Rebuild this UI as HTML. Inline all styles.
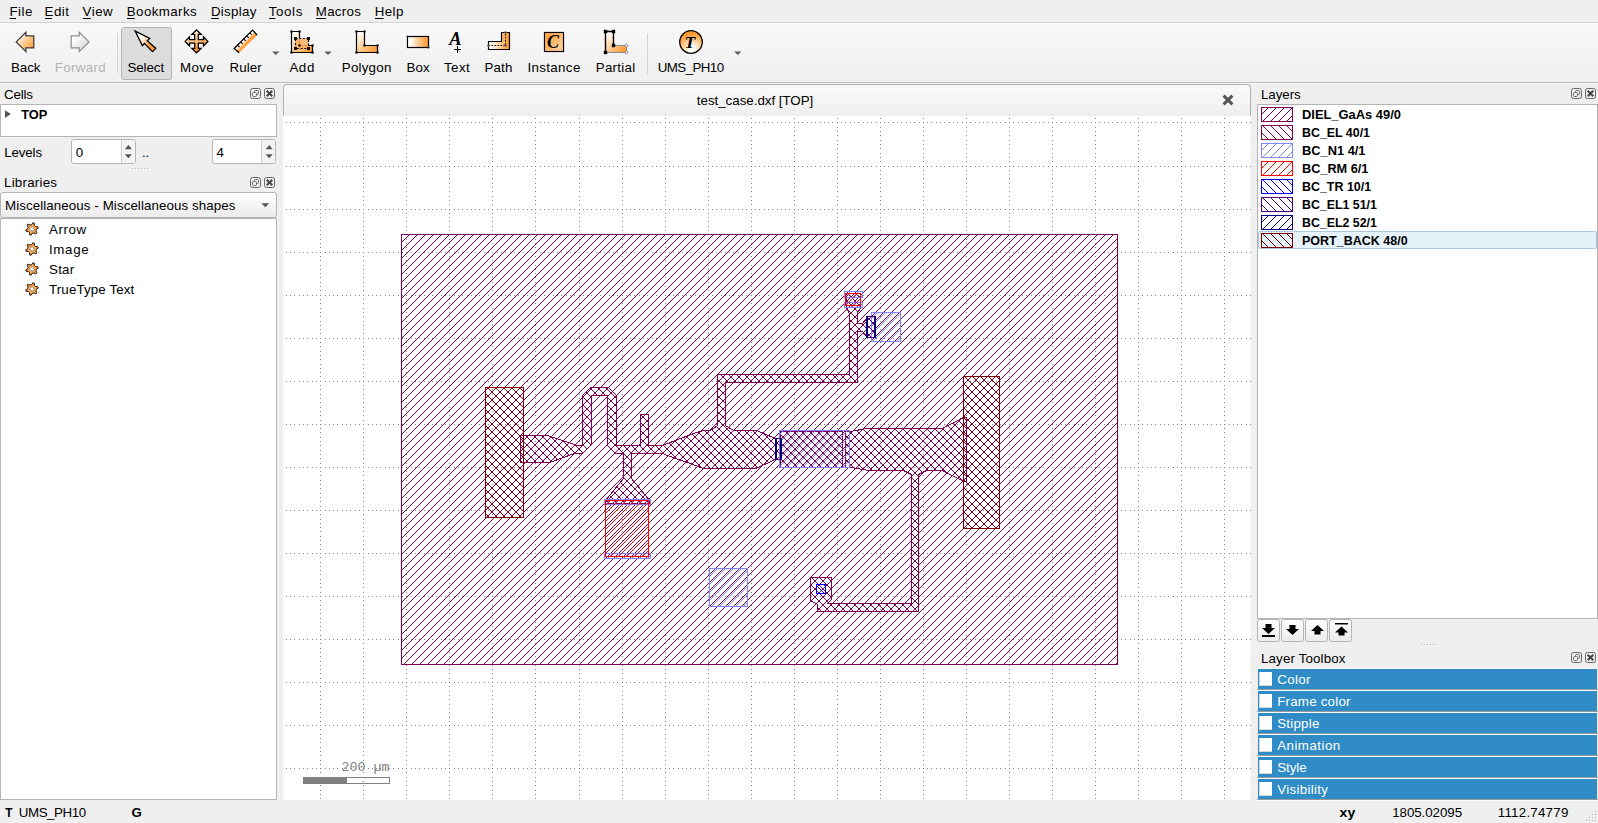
<!DOCTYPE html><html><head><meta charset="utf-8"><title>KLayout</title><style>
*{box-sizing:border-box;margin:0;padding:0}
html,body{width:1598px;height:823px;overflow:hidden}
body{background:#efefef;font-family:"Liberation Sans","DejaVu Sans",sans-serif;font-size:13.33px;color:#000;position:relative}
.a{position:absolute;white-space:nowrap;line-height:1}
.cv{position:absolute;left:283px;top:116px;isolation:isolate}

.ov{position:absolute;left:0;top:0;font-family:"Liberation Sans","DejaVu Sans",sans-serif;font-size:13.33px}
.menubar{left:0;top:0;width:1598px;height:23px;background:#efefef;border-bottom:1px solid #d4d4d4}
.toolbar{left:0;top:23px;width:1598px;height:60px;background:linear-gradient(#f8f8f8,#efefef);border-bottom:1px solid #bdbdbd}
.box{background:#fff;border:1px solid #b4b4b4}
.btn{border:1px solid #b4b4b4;border-radius:3px;background:linear-gradient(#fefefe,#ebebeb)}
.bar{left:1258px;width:339px;height:20px;background:#308cc6}
.barl{left:1257px;width:341px;height:1px;background:#9a9a9a}
.chk{left:1px;top:3px;width:13px;height:14px;background:#fff;border-left:1px solid #d8d8d8;border-bottom:1px solid #d8d8d8}
.spin{background:#fff;border:1px solid #b4b4b4;border-radius:3px;width:65px;height:25px;overflow:hidden}
.spin i{position:absolute;right:0;top:0;width:14px;height:23px;background:#f4f4f4;border-left:1px solid #d0d0d0}
</style></head><body><div class="a menubar" style=""></div>
<div class="a toolbar" style=""></div>
<div class="a " style="left:0;top:83px;width:1598px;height:1px;background:#f7f7f7"></div>
<div class="a " style="left:121px;top:27px;width:51px;height:53px;background:#dcdcdc;border:1px solid #b2b2b2;border-radius:3px"></div>
<div class="a " style="left:117px;top:33px;width:1px;height:41px;background:#d2d2d2"></div>
<div class="a " style="left:647px;top:33px;width:1px;height:41px;background:#d2d2d2"></div>
<div class="a box" style="left:0;top:104px;width:277px;height:33px"></div>
<div class="a spin" style="left:71px;top:139px"><i></i></div>
<div class="a spin" style="left:212px;top:139px;width:64px"><i></i></div>
<div class="a btn" style="left:0;top:192px;width:277px;height:26px"></div>
<div class="a box" style="left:0;top:218px;width:277px;height:582px"></div>
<div class="a " style="left:283px;top:84px;width:968px;height:32px;background:linear-gradient(#f9f9f9,#efefef);border:1px solid #b0b0b0;border-bottom:none;border-radius:4px 4px 0 0"></div>
<svg class="cv" width="968" height="684" viewBox="283 116 968 684" shape-rendering="crispEdges"><defs><pattern id="h0" patternUnits="userSpaceOnUse" width="8" height="8" fill="#800057"><rect x="3" y="0" width="1" height="1"/><rect x="2" y="1" width="1" height="1"/><rect x="1" y="2" width="1" height="1"/><rect x="0" y="3" width="1" height="1"/><rect x="7" y="4" width="1" height="1"/><rect x="6" y="5" width="1" height="1"/><rect x="5" y="6" width="1" height="1"/><rect x="4" y="7" width="1" height="1"/></pattern><pattern id="h1" patternUnits="userSpaceOnUse" width="8" height="8" fill="#800057"><rect x="2" y="0" width="1" height="1"/><rect x="3" y="1" width="1" height="1"/><rect x="4" y="2" width="1" height="1"/><rect x="5" y="3" width="1" height="1"/><rect x="6" y="4" width="1" height="1"/><rect x="7" y="5" width="1" height="1"/><rect x="0" y="6" width="1" height="1"/><rect x="1" y="7" width="1" height="1"/></pattern><pattern id="h2" patternUnits="userSpaceOnUse" width="8" height="8" fill="#8086ff"><rect x="5" y="0" width="1" height="1"/><rect x="4" y="1" width="1" height="1"/><rect x="3" y="2" width="1" height="1"/><rect x="2" y="3" width="1" height="1"/><rect x="1" y="4" width="1" height="1"/><rect x="0" y="5" width="1" height="1"/><rect x="7" y="6" width="1" height="1"/><rect x="6" y="7" width="1" height="1"/></pattern><pattern id="h3" patternUnits="userSpaceOnUse" width="8" height="8" fill="#ff0000"><rect x="6" y="0" width="1" height="1"/><rect x="5" y="1" width="1" height="1"/><rect x="4" y="2" width="1" height="1"/><rect x="3" y="3" width="1" height="1"/><rect x="2" y="4" width="1" height="1"/><rect x="1" y="5" width="1" height="1"/><rect x="0" y="6" width="1" height="1"/><rect x="7" y="7" width="1" height="1"/></pattern><pattern id="h4" patternUnits="userSpaceOnUse" width="8" height="8" fill="#0000ff"><rect x="7" y="0" width="1" height="1"/><rect x="0" y="1" width="1" height="1"/><rect x="1" y="2" width="1" height="1"/><rect x="2" y="3" width="1" height="1"/><rect x="3" y="4" width="1" height="1"/><rect x="4" y="5" width="1" height="1"/><rect x="5" y="6" width="1" height="1"/><rect x="6" y="7" width="1" height="1"/></pattern><pattern id="h5" patternUnits="userSpaceOnUse" width="8" height="8" fill="#500080"><rect x="6" y="0" width="1" height="1"/><rect x="7" y="1" width="1" height="1"/><rect x="0" y="2" width="1" height="1"/><rect x="1" y="3" width="1" height="1"/><rect x="2" y="4" width="1" height="1"/><rect x="3" y="5" width="1" height="1"/><rect x="4" y="6" width="1" height="1"/><rect x="5" y="7" width="1" height="1"/></pattern><pattern id="h6" patternUnits="userSpaceOnUse" width="8" height="8" fill="#000080"><rect x="1" y="0" width="1" height="1"/><rect x="0" y="1" width="1" height="1"/><rect x="7" y="2" width="1" height="1"/><rect x="6" y="3" width="1" height="1"/><rect x="5" y="4" width="1" height="1"/><rect x="4" y="5" width="1" height="1"/><rect x="3" y="6" width="1" height="1"/><rect x="2" y="7" width="1" height="1"/></pattern><pattern id="h7" patternUnits="userSpaceOnUse" width="8" height="8" fill="#800000"><rect x="4" y="0" width="1" height="1"/><rect x="5" y="1" width="1" height="1"/><rect x="6" y="2" width="1" height="1"/><rect x="7" y="3" width="1" height="1"/><rect x="0" y="4" width="1" height="1"/><rect x="1" y="5" width="1" height="1"/><rect x="2" y="6" width="1" height="1"/><rect x="3" y="7" width="1" height="1"/></pattern><path id="gh" d="M286 0h1m3 0h1m3 0h1m4 0h1m3 0h1m3 0h1m4 0h1m3 0h1m3 0h1m4 0h1m3 0h1m3 0h1m3 0h1m4 0h1m3 0h1m3 0h1m4 0h1m3 0h1m3 0h1m4 0h1m3 0h1m3 0h1m3 0h1m4 0h1m3 0h1m3 0h1m4 0h1m3 0h1m3 0h1m4 0h1m3 0h1m3 0h1m4 0h1m3 0h1m3 0h1m3 0h1m4 0h1m3 0h1m3 0h1m4 0h1m3 0h1m3 0h1m4 0h1m3 0h1m3 0h1m3 0h1m4 0h1m3 0h1m3 0h1m4 0h1m3 0h1m3 0h1m4 0h1m3 0h1m3 0h1m4 0h1m3 0h1m3 0h1m3 0h1m4 0h1m3 0h1m3 0h1m4 0h1m3 0h1m3 0h1m4 0h1m3 0h1m3 0h1m4 0h1m3 0h1m3 0h1m3 0h1m4 0h1m3 0h1m3 0h1m4 0h1m3 0h1m3 0h1m4 0h1m3 0h1m3 0h1m3 0h1m4 0h1m3 0h1m3 0h1m4 0h1m3 0h1m3 0h1m4 0h1m3 0h1m3 0h1m4 0h1m3 0h1m3 0h1m3 0h1m4 0h1m3 0h1m3 0h1m4 0h1m3 0h1m3 0h1m4 0h1m3 0h1m3 0h1m3 0h1m4 0h1m3 0h1m3 0h1m4 0h1m3 0h1m3 0h1m4 0h1m3 0h1m3 0h1m4 0h1m3 0h1m3 0h1m3 0h1m4 0h1m3 0h1m3 0h1m4 0h1m3 0h1m3 0h1m4 0h1m3 0h1m3 0h1m3 0h1m4 0h1m3 0h1m3 0h1m4 0h1m3 0h1m3 0h1m4 0h1m3 0h1m3 0h1m4 0h1m3 0h1m3 0h1m3 0h1m4 0h1m3 0h1m3 0h1m4 0h1m3 0h1m3 0h1m4 0h1m3 0h1m3 0h1m3 0h1m4 0h1m3 0h1m3 0h1m4 0h1m3 0h1m3 0h1m4 0h1m3 0h1m3 0h1m4 0h1m3 0h1m3 0h1m3 0h1m4 0h1m3 0h1m3 0h1m4 0h1m3 0h1m3 0h1m4 0h1m3 0h1m3 0h1m4 0h1m3 0h1m3 0h1m3 0h1m4 0h1m3 0h1m3 0h1m4 0h1m3 0h1m3 0h1m4 0h1m3 0h1m3 0h1m3 0h1m4 0h1m3 0h1m3 0h1m4 0h1m3 0h1m3 0h1m4 0h1m3 0h1m3 0h1m4 0h1m3 0h1m3 0h1m3 0h1m4 0h1m3 0h1m3 0h1m4 0h1m3 0h1m3 0h1m4 0h1m3 0h1m3 0h1m3 0h1m4 0h1m3 0h1m3 0h1m4 0h1m3 0h1m3 0h1m4 0h1m3 0h1m3 0h1m4 0h1m3 0h1m3 0h1m3 0h1m4 0h1m3 0h1" stroke="#808080" stroke-width="1" fill="none"/><path id="gv" d="M0 118v1m0 3v1m0 4v1m0 3v1m0 3v1m0 4v1m0 3v1m0 3v1m0 4v1m0 3v1m0 3v1m0 4v1m0 3v1m0 3v1m0 3v1m0 4v1m0 3v1m0 3v1m0 4v1m0 3v1m0 3v1m0 4v1m0 3v1m0 3v1m0 3v1m0 4v1m0 3v1m0 3v1m0 4v1m0 3v1m0 3v1m0 4v1m0 3v1m0 3v1m0 4v1m0 3v1m0 3v1m0 3v1m0 4v1m0 3v1m0 3v1m0 4v1m0 3v1m0 3v1m0 4v1m0 3v1m0 3v1m0 4v1m0 3v1m0 3v1m0 3v1m0 4v1m0 3v1m0 3v1m0 4v1m0 3v1m0 3v1m0 4v1m0 3v1m0 3v1m0 3v1m0 4v1m0 3v1m0 3v1m0 4v1m0 3v1m0 3v1m0 4v1m0 3v1m0 3v1m0 4v1m0 3v1m0 3v1m0 3v1m0 4v1m0 3v1m0 3v1m0 4v1m0 3v1m0 3v1m0 4v1m0 3v1m0 3v1m0 3v1m0 4v1m0 3v1m0 3v1m0 4v1m0 3v1m0 3v1m0 4v1m0 3v1m0 3v1m0 4v1m0 3v1m0 3v1m0 3v1m0 4v1m0 3v1m0 3v1m0 4v1m0 3v1m0 3v1m0 4v1m0 3v1m0 3v1m0 3v1m0 4v1m0 3v1m0 3v1m0 4v1m0 3v1m0 3v1m0 4v1m0 3v1m0 3v1m0 4v1m0 3v1m0 3v1m0 3v1m0 4v1m0 3v1m0 3v1m0 4v1m0 3v1m0 3v1m0 4v1m0 3v1m0 3v1m0 3v1m0 4v1m0 3v1m0 3v1m0 4v1m0 3v1m0 3v1m0 4v1m0 3v1m0 3v1m0 4v1m0 3v1m0 3v1m0 3v1m0 4v1m0 3v1m0 3v1m0 4v1m0 3v1m0 3v1m0 4v1m0 3v1m0 3v1m0 3v1m0 4v1m0 3v1m0 3v1m0 4v1m0 3v1m0 3v1" stroke="#808080" stroke-width="1" fill="none"/></defs><rect x="283" y="116" width="968" height="684" fill="#fff"/><use href="#gh" y="122.5"/><use href="#gh" y="166.5"/><use href="#gh" y="209.5"/><use href="#gh" y="252.5"/><use href="#gh" y="295.5"/><use href="#gh" y="338.5"/><use href="#gh" y="381.5"/><use href="#gh" y="424.5"/><use href="#gh" y="467.5"/><use href="#gh" y="510.5"/><use href="#gh" y="553.5"/><use href="#gh" y="596.5"/><use href="#gh" y="639.5"/><use href="#gh" y="682.5"/><use href="#gh" y="725.5"/><use href="#gh" y="768.5"/><use href="#gv" x="320.5"/><use href="#gv" x="363.5"/><use href="#gv" x="406.5"/><use href="#gv" x="449.5"/><use href="#gv" x="492.5"/><use href="#gv" x="535.5"/><use href="#gv" x="579.5"/><use href="#gv" x="622.5"/><use href="#gv" x="665.5"/><use href="#gv" x="708.5"/><use href="#gv" x="751.5"/><use href="#gv" x="794.5"/><use href="#gv" x="837.5"/><use href="#gv" x="880.5"/><use href="#gv" x="923.5"/><use href="#gv" x="966.5"/><use href="#gv" x="1009.5"/><use href="#gv" x="1052.5"/><use href="#gv" x="1095.5"/><use href="#gv" x="1138.5"/><use href="#gv" x="1181.5"/><use href="#gv" x="1224.5"/><polygon class="m" points="401.5,234.5 1117.5,234.5 1117.5,664.5 401.5,664.5" fill="url(#h0)" stroke="#800057" stroke-width="1"/><polygon class="m" points="520.5,435.5 547.5,435.5 577.5,445.5 582.5,445.5 582.5,395.5 590.5,387.5 608.5,387.5 616.5,395.5 616.5,445.5 640.5,445.5 640.5,414.5 648.5,414.5 648.5,445.5 662.5,445.5 675.5,440.5 688.5,435.5 696.5,432.5 703.5,430.5 710.5,430.5 717.5,425.5 717.5,374.5 849.5,374.5 849.5,313.5 846.5,308.5 846.5,293.5 860.5,293.5 860.5,308.5 857.5,312.5 857.5,323.5 862.5,323.5 866.5,318.5 866.5,336.5 862.5,331.5 857.5,331.5 857.5,382.5 725.5,382.5 725.5,425.5 733.5,430.5 756.5,430.5 775.5,438.5 775.5,459.5 755.5,468.5 703.5,468.5 695.5,465.5 687.5,462.5 675.5,458.5 662.5,453.5 631.5,453.5 631.5,478.5 649.5,500.5 649.5,503.5 605.5,503.5 605.5,500.5 623.5,478.5 623.5,453.5 615.5,453.5 607.5,445.5 607.5,395.5 591.5,395.5 591.5,444.5 582.5,453.5 574.5,453.5 549.5,462.5 520.5,462.5" fill="url(#h1)" stroke="#800057" stroke-width="1"/><polygon class="m" points="780.5,431.5 842.5,431.5 842.5,467.5 780.5,467.5" fill="url(#h1)" stroke="#800057" stroke-width="1"/><polygon class="m" points="845.5,431.5 850.5,431.5 866.5,428.5 942.5,428.5 963.5,417.5 966.5,417.5 966.5,481.5 963.5,481.5 942.5,470.5 926.5,470.5 918.5,474.5 918.5,611.5 817.5,611.5 817.5,604.5 810.5,600.5 810.5,577.5 831.5,577.5 831.5,599.5 827.5,603.5 911.5,603.5 911.5,474.5 903.5,470.5 869.5,470.5 850.5,467.5 845.5,467.5" fill="url(#h1)" stroke="#800057" stroke-width="1"/><polygon class="m" points="709.5,568.5 747.5,568.5 747.5,606.5 709.5,606.5" fill="url(#h2)" stroke="#8086ff" stroke-width="1"/><polygon class="m" points="871.5,312.5 900.5,312.5 900.5,341.5 871.5,341.5" fill="url(#h2)" stroke="#8086ff" stroke-width="1"/><polygon class="m" points="779.5,430.5 849.5,430.5 849.5,467.5 779.5,467.5" fill="url(#h2)" stroke="#8086ff" stroke-width="1"/><polygon class="m" points="604.5,499.5 650.5,499.5 650.5,504.5 604.5,504.5" fill="url(#h2)" stroke="#8086ff" stroke-width="1"/><polygon class="m" points="604.5,553.5 650.5,553.5 650.5,558.5 604.5,558.5" fill="url(#h2)" stroke="#8086ff" stroke-width="1"/><polygon class="m" points="844.5,291.5 862.5,291.5 862.5,297.5 844.5,297.5" fill="url(#h2)" stroke="#8086ff" stroke-width="1"/><polygon class="m" points="844.5,302.5 862.5,302.5 862.5,307.5 844.5,307.5" fill="url(#h2)" stroke="#8086ff" stroke-width="1"/><polygon class="m" points="605.5,500.5 648.5,500.5 648.5,556.5 605.5,556.5" fill="url(#h3)" stroke="#ff0000" stroke-width="1"/><polygon class="m" points="845.5,293.5 860.5,293.5 860.5,305.5 845.5,305.5" fill="url(#h3)" stroke="#ff0000" stroke-width="1"/><polygon class="m" points="816.5,584.5 825.5,584.5 825.5,593.5 816.5,593.5" fill="url(#h4)" stroke="#0000ff" stroke-width="1"/><polygon class="m" points="866.5,316.5 875.5,316.5 875.5,337.5 866.5,337.5" fill="url(#h5)" stroke="#500080" stroke-width="1"/><polygon class="m" points="775.5,438.5 781.5,438.5 781.5,459.5 775.5,459.5" fill="url(#h5)" stroke="#500080" stroke-width="1"/><rect class="m" x="866" y="316" width="2" height="22" fill="#000080"/><rect class="m" x="874" y="316" width="2" height="22" fill="#000080"/><rect class="m" x="775" y="438" width="2" height="22" fill="#000080"/><rect class="m" x="780" y="438" width="2" height="22" fill="#000080"/><polygon class="m" points="485.5,387.5 523.5,387.5 523.5,517.5 485.5,517.5" fill="url(#h7)" stroke="#800000" stroke-width="1"/><polygon class="m" points="963.5,376.5 999.5,376.5 999.5,528.5 963.5,528.5" fill="url(#h7)" stroke="#800000" stroke-width="1"/><rect x="303" y="777" width="44" height="7" fill="#808080"/><rect x="303.5" y="777.5" width="86" height="6" fill="none" stroke="#808080"/><text x="341.5" y="771" font-family="Liberation Mono,DejaVu Sans Mono,monospace" font-size="13.3" fill="#808080" textLength="48" lengthAdjust="spacingAndGlyphs">200 µm</text></svg>
<div class="a box" style="left:1257px;top:104px;width:341px;height:515px"></div>
<div class="a " style="left:1258px;top:231px;width:339px;height:18px;background:#e6f2fa;border:1px solid #a9c9de;border-radius:2px"></div>
<div class="a btn" style="left:1257px;top:619px;width:23px;height:23px"></div>
<div class="a btn" style="left:1281px;top:619px;width:23px;height:23px"></div>
<div class="a btn" style="left:1305px;top:619px;width:23px;height:23px"></div>
<div class="a btn" style="left:1329px;top:619px;width:23px;height:23px"></div>
<div class="a " style="left:1258px;top:668px;width:340px;height:1px;background:#fcfcfc"></div>
<div class="a bar" style="top:669px"><div class="a chk"></div></div>
<div class="a barl" style="top:689px"></div>
<div class="a " style="top:690px;left:1258px;width:340px;height:1px;background:#fbfbfb"></div>
<div class="a bar" style="top:691px"><div class="a chk"></div></div>
<div class="a barl" style="top:711px"></div>
<div class="a " style="top:712px;left:1258px;width:340px;height:1px;background:#fbfbfb"></div>
<div class="a bar" style="top:713px"><div class="a chk"></div></div>
<div class="a barl" style="top:733px"></div>
<div class="a " style="top:734px;left:1258px;width:340px;height:1px;background:#fbfbfb"></div>
<div class="a bar" style="top:735px"><div class="a chk"></div></div>
<div class="a barl" style="top:755px"></div>
<div class="a " style="top:756px;left:1258px;width:340px;height:1px;background:#fbfbfb"></div>
<div class="a bar" style="top:757px"><div class="a chk"></div></div>
<div class="a barl" style="top:777px"></div>
<div class="a " style="top:778px;left:1258px;width:340px;height:1px;background:#fbfbfb"></div>
<div class="a bar" style="top:779px"><div class="a chk"></div></div>
<div class="a barl" style="top:799px"></div>
<div class="a " style="top:800px;left:1258px;width:340px;height:1px;background:#fbfbfb"></div><svg class="ov" width="1598" height="823" viewBox="0 0 1598 823"><defs>
<linearGradient id="go" x1="0" y1="0" x2="1" y2="1"><stop offset="0.1" stop-color="#fff"/><stop offset="0.9" stop-color="#ff9a30"/></linearGradient>
<linearGradient id="goh" x1="0" y1="0" x2="1" y2="0"><stop offset="0.1" stop-color="#fff"/><stop offset="0.95" stop-color="#ff9a30"/></linearGradient>
<linearGradient id="gov" x1="0" y1="0" x2="0.4" y2="1"><stop offset="0.1" stop-color="#fff"/><stop offset="0.9" stop-color="#ff9a30"/></linearGradient>
<linearGradient id="gg" x1="0" y1="0" x2="1" y2="1"><stop offset="0.2" stop-color="#fff"/><stop offset="1" stop-color="#cfcfcf"/></linearGradient>
<linearGradient id="gsel" gradientUnits="userSpaceOnUse" x1="139" y1="35" x2="154" y2="50"><stop offset="0.15" stop-color="#fff"/><stop offset="0.7" stop-color="#ffa040"/></linearGradient>
<linearGradient id="grul" gradientUnits="userSpaceOnUse" x1="243.3" y1="39.3" x2="248.2" y2="44.2"><stop offset="0.25" stop-color="#fff"/><stop offset="0.7" stop-color="#ff9a30"/></linearGradient>
<radialGradient id="gums" cx="0.55" cy="0.8" r="0.75"><stop offset="0.15" stop-color="#fff"/><stop offset="0.9" stop-color="#ff9a30"/></radialGradient>
<linearGradient id="ginst" x1="0" y1="0" x2="1" y2="1"><stop offset="0.1" stop-color="#ff9a30"/><stop offset="0.9" stop-color="#ffd9b0"/></linearGradient>
<g id="fl"><rect x="0.5" y="0.5" width="10" height="10" rx="2" fill="none" stroke="#666"/><rect x="4.5" y="2.5" width="4" height="4" rx="1" fill="none" stroke="#666"/><rect x="2.5" y="4.5" width="4" height="4" rx="1" fill="#efefef" stroke="#666"/></g>
<g id="cl"><rect x="0.5" y="0.5" width="10" height="10" rx="2" fill="none" stroke="#666"/><path d="M2.7 2.7L8.3 8.3M8.3 2.7L2.7 8.3" stroke="#444" stroke-width="2"/></g>
<path id="dd" d="M0 0h7.6l-3.8 3.6z" fill="#5e5e5e"/>
<g id="gear"><path fill="#ffa242" stroke="#1c1c1c" stroke-width="1" stroke-linejoin="round" d="M-0.23 -4.39L0.86 -6.24L2.38 -5.83L2.40 -3.69L3.69 -2.40L5.83 -2.38L6.24 -0.86L4.39 0.23L3.92 2.00L4.98 3.86L3.86 4.98L2.00 3.92L0.23 4.39L-0.86 6.24L-2.38 5.83L-2.40 3.69L-3.69 2.40L-5.83 2.38L-6.24 0.86L-4.39 -0.23L-3.92 -2.00L-4.98 -3.86L-3.86 -4.98L-2.00 -3.92Z"/><circle r="2" fill="#fff" stroke="#a0a0a0" stroke-width="1.1"/></g>
</defs><path d="M16.2 41.9L25.9 32.3V35.9H33.8V47.9H25.9V51.6Z" fill="url(#go)" stroke="#3a3a3a" stroke-width="1.2" stroke-linejoin="miter"/><path d="M89 41.9L79.2 32.3V35.9H71.2V47.9H79.2V51.6Z" fill="url(#gg)" stroke="#8c8c8c" stroke-width="1.2"/><path d="M135.2 31.2L149.8 38.4L147.2 40.8L155.8 48.4L152.5 51.7L144.5 43.5L142.4 45.6Z" fill="url(#gsel)" stroke="#000" stroke-width="1.3" stroke-linejoin="miter"/><path d="M196.5 30.0L201.1 34.4L198.3 34.4L198.3 39.6L203.5 39.6L203.5 36.8L207.9 41.4L203.5 46.0L203.5 43.2L198.3 43.2L198.3 48.4L201.1 48.4L196.5 52.8L191.9 48.4L194.7 48.4L194.7 43.2L189.5 43.2L189.5 46.0L185.1 41.4L189.5 36.8L189.5 39.6L194.7 39.6L194.7 34.4L191.9 34.4Z" fill="url(#gov)" stroke="#000" stroke-width="1.3" stroke-linejoin="miter"/><path d="M234.2 48.5L252.5 30.1L257.2 35.1L239.1 52.8Z" fill="url(#grul)"/><path d="M239.1 52.8L234.2 48.5L252.5 30.1L257.2 35.1" fill="none" stroke="#000" stroke-width="1.3"/><path d="M237.6 45.1l1.9 1.9M240.7 42.0l1.9 1.9M243.7 38.9l1.9 1.9M246.8 35.9l1.9 1.9M249.8 32.8l1.9 1.9" stroke="#000" stroke-width="1.1"/><use href="#dd" x="272" y="51.4"/><path d="M291.5 31.5L299.5 31.5L299.5 45.5L312.5 45.5L312.5 52.5L291.5 52.5Z" fill="url(#go)" stroke="#000" stroke-width="1.2"/><rect x="295.5" y="38.5" width="13" height="10" fill="#ffb060" fill-opacity="0.85" stroke="#000" stroke-width="1.2" stroke-dasharray="2 1.6"/><circle cx="291.5" cy="31.5" r="1.3" fill="#111"/><circle cx="299.5" cy="31.5" r="1.3" fill="#111"/><circle cx="299.5" cy="45.5" r="1.3" fill="#111"/><circle cx="312.5" cy="45.5" r="1.3" fill="#111"/><circle cx="312.5" cy="52.5" r="1.3" fill="#111"/><circle cx="291.5" cy="52.5" r="1.3" fill="#111"/><rect x="294.0" y="37.0" width="3" height="3" fill="#111"/><rect x="307.0" y="37.0" width="3" height="3" fill="#111"/><rect x="307.0" y="47.0" width="3" height="3" fill="#111"/><rect x="294.0" y="47.0" width="3" height="3" fill="#111"/><use href="#dd" x="324.2" y="51.4"/><path d="M356.5 31.5L364.5 31.5L364.5 45.5L377.5 45.5L377.5 52.5L356.5 52.5Z" fill="url(#go)" stroke="#000" stroke-width="1.2"/><circle cx="356.5" cy="31.5" r="1.3" fill="#111"/><circle cx="364.5" cy="31.5" r="1.3" fill="#111"/><circle cx="364.5" cy="45.5" r="1.3" fill="#111"/><circle cx="377.5" cy="45.5" r="1.3" fill="#111"/><circle cx="377.5" cy="52.5" r="1.3" fill="#111"/><circle cx="356.5" cy="52.5" r="1.3" fill="#111"/><rect x="407.5" y="36.5" width="21" height="11" fill="url(#goh)" stroke="#000" stroke-width="1.2"/><circle cx="407.5" cy="36.5" r="1.1" fill="#333"/><circle cx="428.5" cy="47.5" r="1.1" fill="#333"/><text x="449.3" y="45" font-family="Liberation Serif,DejaVu Serif,serif" font-size="18.5" font-weight="bold" font-style="italic" fill="#000">A</text><path d="M454 49.5h7M457.5 46v7" stroke="#000" stroke-width="1"/><path d="M488.5 41.5H501.5V32.5H509.5V49.5H488.5Z" fill="url(#goh)" stroke="#000" stroke-width="1.2"/><path d="M488.5 45.5H505.5V32.5" fill="none" stroke="#000" stroke-width="1" stroke-dasharray="1.6 1.4"/><circle cx="488.5" cy="45.5" r="1.2" fill="#555"/><circle cx="505.5" cy="45.5" r="1.2" fill="#555"/><circle cx="505.5" cy="32.5" r="1.2" fill="#555"/><rect x="544.5" y="32.5" width="19" height="19" fill="url(#ginst)" stroke="#000" stroke-width="1.2"/><rect x="546" y="34" width="16" height="16" fill="none" stroke="#ffb770" stroke-width="1"/><text x="547" y="47.6" font-family="Liberation Serif,DejaVu Serif,serif" font-size="18" font-weight="bold" font-style="italic" fill="#000">C</text><path d="M605.5 31.5L613.5 31.5L613.5 45.5L626.5 45.5L626.5 52.5L605.5 52.5Z" fill="url(#go)" stroke="#8a8a8a" stroke-width="1"/><path d="M605.5 52.5V31.5H613.5V45.5" fill="none" stroke="#000" stroke-width="1.4"/><rect x="603.8" y="29.8" width="3.4" height="3.4" fill="#000"/><rect x="611.8" y="29.8" width="3.4" height="3.4" fill="#000"/><rect x="611.8" y="43.8" width="3.4" height="3.4" fill="#000"/><rect x="603.8" y="50.8" width="3.4" height="3.4" fill="#000"/><circle cx="626.5" cy="45.5" r="1.3" fill="#fff" stroke="#777" stroke-width="0.8"/><circle cx="626.5" cy="52.5" r="1.3" fill="#fff" stroke="#777" stroke-width="0.8"/><circle cx="691" cy="42" r="11.3" fill="url(#gums)" stroke="#000" stroke-width="1.3"/><text x="684.6" y="47.6" font-family="Liberation Serif,DejaVu Serif,serif" font-size="17.5" font-weight="bold" font-style="italic" fill="#000">T</text><use href="#dd" x="734" y="51.4"/><use href="#fl" x="250" y="88"/><use href="#cl" x="264" y="88"/><use href="#fl" x="250" y="177"/><use href="#cl" x="264" y="177"/><use href="#fl" x="1571" y="88"/><use href="#cl" x="1585" y="88"/><use href="#fl" x="1571" y="652"/><use href="#cl" x="1585" y="652"/><path d="M5 110.2V118L10.9 114.1Z" fill="#555"/><path d="M124.80000000000001 149.2h7.2l-3.6-4.2zM124.80000000000001 154.2h7.2l-3.6 4z" fill="#555"/><path d="M265.59999999999997 149.2h7.2l-3.6-4.2zM265.59999999999997 154.2h7.2l-3.6 4z" fill="#555"/><path d="M261.4 203.2h7.8l-3.9 4z" fill="#555"/><rect x="132" y="168" width="1" height="1" fill="#b4b4b4"/><rect x="133" y="169" width="1" height="1" fill="#fbfbfb"/><rect x="135" y="168" width="1" height="1" fill="#b4b4b4"/><rect x="136" y="169" width="1" height="1" fill="#fbfbfb"/><rect x="138" y="168" width="1" height="1" fill="#b4b4b4"/><rect x="139" y="169" width="1" height="1" fill="#fbfbfb"/><rect x="141" y="168" width="1" height="1" fill="#b4b4b4"/><rect x="142" y="169" width="1" height="1" fill="#fbfbfb"/><rect x="144" y="168" width="1" height="1" fill="#b4b4b4"/><rect x="145" y="169" width="1" height="1" fill="#fbfbfb"/><rect x="147" y="168" width="1" height="1" fill="#b4b4b4"/><rect x="148" y="169" width="1" height="1" fill="#fbfbfb"/><rect x="1421" y="644" width="1" height="1" fill="#b4b4b4"/><rect x="1422" y="645" width="1" height="1" fill="#fbfbfb"/><rect x="1424" y="644" width="1" height="1" fill="#b4b4b4"/><rect x="1425" y="645" width="1" height="1" fill="#fbfbfb"/><rect x="1427" y="644" width="1" height="1" fill="#b4b4b4"/><rect x="1428" y="645" width="1" height="1" fill="#fbfbfb"/><rect x="1430" y="644" width="1" height="1" fill="#b4b4b4"/><rect x="1431" y="645" width="1" height="1" fill="#fbfbfb"/><rect x="1433" y="644" width="1" height="1" fill="#b4b4b4"/><rect x="1434" y="645" width="1" height="1" fill="#fbfbfb"/><rect x="1436" y="644" width="1" height="1" fill="#b4b4b4"/><rect x="1437" y="645" width="1" height="1" fill="#fbfbfb"/><use href="#gear" x="32" y="229"/><use href="#gear" x="32" y="249"/><use href="#gear" x="32" y="269"/><use href="#gear" x="32" y="289"/><path d="M1223.6 95.6L1232.4 104.4M1232.4 95.6L1223.6 104.4" stroke="#555" stroke-width="3"/><g transform="translate(1261,107)" shape-rendering="crispEdges"><pattern id="li0" patternUnits="userSpaceOnUse" width="8" height="8" fill="#800057"><rect x="7" y="0" width="1" height="1"/><rect x="6" y="1" width="1" height="1"/><rect x="5" y="2" width="1" height="1"/><rect x="4" y="3" width="1" height="1"/><rect x="3" y="4" width="1" height="1"/><rect x="2" y="5" width="1" height="1"/><rect x="1" y="6" width="1" height="1"/><rect x="0" y="7" width="1" height="1"/></pattern><rect x="0.5" y="0.5" width="31" height="14" fill="url(#li0)" stroke="#800057"/></g><g transform="translate(1261,125)" shape-rendering="crispEdges"><pattern id="li1" patternUnits="userSpaceOnUse" width="8" height="8" fill="#800057"><rect x="1" y="0" width="1" height="1"/><rect x="2" y="1" width="1" height="1"/><rect x="3" y="2" width="1" height="1"/><rect x="4" y="3" width="1" height="1"/><rect x="5" y="4" width="1" height="1"/><rect x="6" y="5" width="1" height="1"/><rect x="7" y="6" width="1" height="1"/><rect x="0" y="7" width="1" height="1"/></pattern><rect x="0.5" y="0.5" width="31" height="14" fill="url(#li1)" stroke="#800057"/></g><g transform="translate(1261,143)" shape-rendering="crispEdges"><pattern id="li2" patternUnits="userSpaceOnUse" width="8" height="8" fill="#8086ff"><rect x="7" y="0" width="1" height="1"/><rect x="6" y="1" width="1" height="1"/><rect x="5" y="2" width="1" height="1"/><rect x="4" y="3" width="1" height="1"/><rect x="3" y="4" width="1" height="1"/><rect x="2" y="5" width="1" height="1"/><rect x="1" y="6" width="1" height="1"/><rect x="0" y="7" width="1" height="1"/></pattern><rect x="0.5" y="0.5" width="31" height="14" fill="url(#li2)" stroke="#8086ff"/></g><g transform="translate(1261,161)" shape-rendering="crispEdges"><pattern id="li3" patternUnits="userSpaceOnUse" width="8" height="8" fill="#ff0000"><rect x="7" y="0" width="1" height="1"/><rect x="6" y="1" width="1" height="1"/><rect x="5" y="2" width="1" height="1"/><rect x="4" y="3" width="1" height="1"/><rect x="3" y="4" width="1" height="1"/><rect x="2" y="5" width="1" height="1"/><rect x="1" y="6" width="1" height="1"/><rect x="0" y="7" width="1" height="1"/></pattern><rect x="0.5" y="0.5" width="31" height="14" fill="url(#li3)" stroke="#ff0000"/></g><g transform="translate(1261,179)" shape-rendering="crispEdges"><pattern id="li4" patternUnits="userSpaceOnUse" width="8" height="8" fill="#0000ff"><rect x="1" y="0" width="1" height="1"/><rect x="2" y="1" width="1" height="1"/><rect x="3" y="2" width="1" height="1"/><rect x="4" y="3" width="1" height="1"/><rect x="5" y="4" width="1" height="1"/><rect x="6" y="5" width="1" height="1"/><rect x="7" y="6" width="1" height="1"/><rect x="0" y="7" width="1" height="1"/></pattern><rect x="0.5" y="0.5" width="31" height="14" fill="url(#li4)" stroke="#0000ff"/></g><g transform="translate(1261,197)" shape-rendering="crispEdges"><pattern id="li5" patternUnits="userSpaceOnUse" width="8" height="8" fill="#500080"><rect x="1" y="0" width="1" height="1"/><rect x="2" y="1" width="1" height="1"/><rect x="3" y="2" width="1" height="1"/><rect x="4" y="3" width="1" height="1"/><rect x="5" y="4" width="1" height="1"/><rect x="6" y="5" width="1" height="1"/><rect x="7" y="6" width="1" height="1"/><rect x="0" y="7" width="1" height="1"/></pattern><rect x="0.5" y="0.5" width="31" height="14" fill="url(#li5)" stroke="#500080"/></g><g transform="translate(1261,215)" shape-rendering="crispEdges"><pattern id="li6" patternUnits="userSpaceOnUse" width="8" height="8" fill="#000080"><rect x="7" y="0" width="1" height="1"/><rect x="6" y="1" width="1" height="1"/><rect x="5" y="2" width="1" height="1"/><rect x="4" y="3" width="1" height="1"/><rect x="3" y="4" width="1" height="1"/><rect x="2" y="5" width="1" height="1"/><rect x="1" y="6" width="1" height="1"/><rect x="0" y="7" width="1" height="1"/></pattern><rect x="0.5" y="0.5" width="31" height="14" fill="url(#li6)" stroke="#000080"/></g><g transform="translate(1261,233)" shape-rendering="crispEdges"><pattern id="li7" patternUnits="userSpaceOnUse" width="8" height="8" fill="#800000"><rect x="1" y="0" width="1" height="1"/><rect x="2" y="1" width="1" height="1"/><rect x="3" y="2" width="1" height="1"/><rect x="4" y="3" width="1" height="1"/><rect x="5" y="4" width="1" height="1"/><rect x="6" y="5" width="1" height="1"/><rect x="7" y="6" width="1" height="1"/><rect x="0" y="7" width="1" height="1"/></pattern><rect x="0.5" y="0.5" width="31" height="14" fill="url(#li7)" stroke="#800000"/></g><path d="M1265.5 624h6v4h3.5l-6.5 6l-6.5-6h3.5zM1262 635h13v2h-13z" fill="#000"/><path d="M1289.5 625h6v4h3.5l-6.5 6l-6.5-6h3.5z" fill="#000"/><path d="M1317.5 625l6.5 6h-3.5v3.6h-6v-3.6h-3.5z" fill="#000"/><path d="M1335 623h13v1.6h-13zM1341.5 626.4l6.5 6h-3.5v3.2h-6v-3.2h-3.5z" fill="#000"/><rect x="1595" y="811" width="1" height="1" fill="#a8a8a8"/><rect x="1596" y="812" width="1" height="1" fill="#fcfcfc"/><rect x="1595" y="814" width="1" height="1" fill="#a8a8a8"/><rect x="1596" y="815" width="1" height="1" fill="#fcfcfc"/><rect x="1592" y="814" width="1" height="1" fill="#a8a8a8"/><rect x="1593" y="815" width="1" height="1" fill="#fcfcfc"/><rect x="1595" y="817" width="1" height="1" fill="#a8a8a8"/><rect x="1596" y="818" width="1" height="1" fill="#fcfcfc"/><rect x="1592" y="817" width="1" height="1" fill="#a8a8a8"/><rect x="1593" y="818" width="1" height="1" fill="#fcfcfc"/><rect x="1589" y="817" width="1" height="1" fill="#a8a8a8"/><rect x="1590" y="818" width="1" height="1" fill="#fcfcfc"/><rect x="1595" y="820" width="1" height="1" fill="#a8a8a8"/><rect x="1596" y="821" width="1" height="1" fill="#fcfcfc"/><rect x="1592" y="820" width="1" height="1" fill="#a8a8a8"/><rect x="1593" y="821" width="1" height="1" fill="#fcfcfc"/><rect x="1589" y="820" width="1" height="1" fill="#a8a8a8"/><rect x="1590" y="821" width="1" height="1" fill="#fcfcfc"/><rect x="1586" y="820" width="1" height="1" fill="#a8a8a8"/><rect x="1587" y="821" width="1" height="1" fill="#fcfcfc"/><text x="9.4" y="16.4" fill="#000" textLength="22.9" lengthAdjust="spacing">File</text><text x="44.6" y="16.4" fill="#000" textLength="24.4" lengthAdjust="spacing">Edit</text><text x="82.6" y="16.4" fill="#000" textLength="30.1" lengthAdjust="spacing">View</text><text x="126.8" y="16.4" fill="#000" textLength="69.9" lengthAdjust="spacing">Bookmarks</text><text x="210.9" y="16.4" fill="#000" textLength="45.4" lengthAdjust="spacing">Display</text><text x="268.8" y="16.4" fill="#000" textLength="33.5" lengthAdjust="spacing">Tools</text><text x="315.8" y="16.4" fill="#000" textLength="45.1" lengthAdjust="spacing">Macros</text><text x="374.8" y="16.4" fill="#000" textLength="28.5" lengthAdjust="spacing">Help</text><path d="M9.7 18.5H16.0M44.9 18.5H52.0M82.9 18.5H90.8M127.1 18.5H134.8M211.2 18.5H219.0M269.1 18.5H275.4M316.1 18.5H326.0M375.1 18.5H383.6" stroke="#000" stroke-width="1"/><text x="11.0" y="71.6" fill="#000" textLength="29.5" lengthAdjust="spacing">Back</text><text x="54.7" y="71.6" fill="#b4b4b4" textLength="51.0" lengthAdjust="spacing">Forward</text><text x="127.4" y="71.6" fill="#000" textLength="36.7" lengthAdjust="spacing">Select</text><text x="180.0" y="71.6" fill="#000" textLength="33.7" lengthAdjust="spacing">Move</text><text x="229.4" y="71.6" fill="#000" textLength="32.3" lengthAdjust="spacing">Ruler</text><text x="289.4" y="71.6" fill="#000" textLength="24.9" lengthAdjust="spacing">Add</text><text x="341.8" y="71.6" fill="#000" textLength="49.5" lengthAdjust="spacing">Polygon</text><text x="406.4" y="71.6" fill="#000" textLength="23.3" lengthAdjust="spacing">Box</text><text x="444.0" y="71.6" fill="#000" textLength="25.7" lengthAdjust="spacing">Text</text><text x="484.4" y="71.6" fill="#000" textLength="27.9" lengthAdjust="spacing">Path</text><text x="527.4" y="71.6" fill="#000" textLength="52.9" lengthAdjust="spacing">Instance</text><text x="595.8" y="71.6" fill="#000" textLength="39.3" lengthAdjust="spacing">Partial</text><text x="657.8" y="71.6" fill="#000" textLength="66.3" lengthAdjust="spacing">UMS_PH10</text><text x="4.0" y="98.7" fill="#000" textLength="29.0" lengthAdjust="spacing">Cells</text><text x="21.2" y="118.6" fill="#000" font-weight="bold" textLength="26.1" lengthAdjust="spacingAndGlyphs">TOP</text><text x="4.3" y="156.6" fill="#000" textLength="37.8" lengthAdjust="spacing">Levels</text><text x="75.8" y="156.6" fill="#000" textLength="7.9" lengthAdjust="spacing">0</text><text x="216.6" y="156.6" fill="#000" textLength="8.9" lengthAdjust="spacing">4</text><text x="142.0" y="156.6" fill="#000" textLength="7.1" lengthAdjust="spacing">..</text><text x="4.0" y="186.7" fill="#000" textLength="53.0" lengthAdjust="spacing">Libraries</text><text x="5.0" y="209.8" fill="#000" textLength="230.4" lengthAdjust="spacing">Miscellaneous - Miscellaneous shapes</text><text x="49.0" y="234" fill="#000" textLength="37.2" lengthAdjust="spacing">Arrow</text><text x="49.0" y="254" fill="#000" textLength="39.7" lengthAdjust="spacing">Image</text><text x="49.0" y="274" fill="#000" textLength="25.2" lengthAdjust="spacing">Star</text><text x="49.0" y="294" fill="#000" textLength="85.2" lengthAdjust="spacing">TrueType Text</text><text x="696.8" y="104.6" fill="#000" textLength="116.5" lengthAdjust="spacing">test_case.dxf [TOP]</text><text x="1261.0" y="99" fill="#000" textLength="39.7" lengthAdjust="spacing">Layers</text><text x="1302.0" y="119" fill="#000" font-weight="bold" textLength="98.9" lengthAdjust="spacingAndGlyphs">DIEL_GaAs 49/0</text><text x="1302.0" y="137" fill="#000" font-weight="bold" textLength="68.0" lengthAdjust="spacingAndGlyphs">BC_EL 40/1</text><text x="1302.0" y="155" fill="#000" font-weight="bold" textLength="63.5" lengthAdjust="spacingAndGlyphs">BC_N1 4/1</text><text x="1302.0" y="173" fill="#000" font-weight="bold" textLength="66.4" lengthAdjust="spacingAndGlyphs">BC_RM 6/1</text><text x="1302.0" y="191" fill="#000" font-weight="bold" textLength="69.1" lengthAdjust="spacingAndGlyphs">BC_TR 10/1</text><text x="1302.0" y="209" fill="#000" font-weight="bold" textLength="74.9" lengthAdjust="spacingAndGlyphs">BC_EL1 51/1</text><text x="1302.0" y="227" fill="#000" font-weight="bold" textLength="74.9" lengthAdjust="spacingAndGlyphs">BC_EL2 52/1</text><text x="1302.0" y="245" fill="#000" font-weight="bold" textLength="105.6" lengthAdjust="spacingAndGlyphs">PORT_BACK 48/0</text><text x="1261.0" y="662.5" fill="#000" textLength="84.5" lengthAdjust="spacing">Layer Toolbox</text><text x="1277.2" y="683.7" fill="#fff" textLength="33.3" lengthAdjust="spacing">Color</text><text x="1277.2" y="705.7" fill="#fff" textLength="73.3" lengthAdjust="spacing">Frame color</text><text x="1277.2" y="727.7" fill="#fff" textLength="42.1" lengthAdjust="spacing">Stipple</text><text x="1277.2" y="749.7" fill="#fff" textLength="63.0" lengthAdjust="spacing">Animation</text><text x="1277.2" y="771.7" fill="#fff" textLength="29.4" lengthAdjust="spacing">Style</text><text x="1277.2" y="793.7" fill="#fff" textLength="50.8" lengthAdjust="spacing">Visibility</text><text x="5.2" y="816.8" fill="#000" font-weight="bold" textLength="7.3" lengthAdjust="spacingAndGlyphs">T</text><text x="18.8" y="816.8" fill="#000" textLength="67.3" lengthAdjust="spacing">UMS_PH10</text><text x="131.4" y="816.8" fill="#000" font-weight="bold" textLength="10.3" lengthAdjust="spacingAndGlyphs">G</text><text x="1339.6" y="816.8" fill="#000" font-weight="bold" textLength="15.6" lengthAdjust="spacingAndGlyphs">xy</text><text x="1392.2" y="816.8" fill="#000" textLength="69.9" lengthAdjust="spacing">1805.02095</text><text x="1497.8" y="816.8" fill="#000" textLength="70.5" lengthAdjust="spacing">1112.74779</text></svg></body></html>
